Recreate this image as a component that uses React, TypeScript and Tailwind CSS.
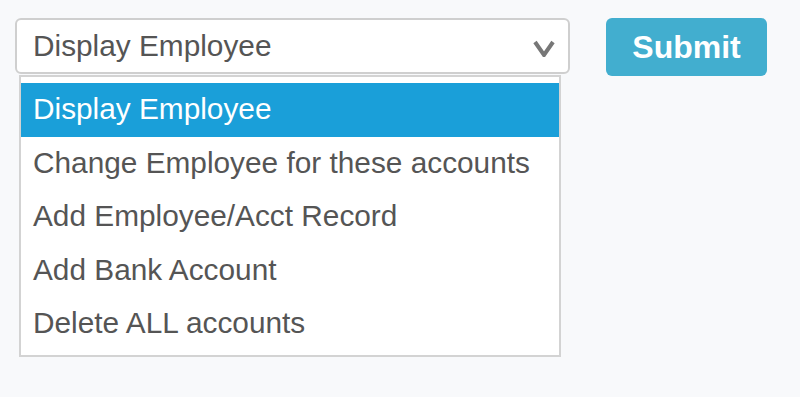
const OPTIONS = [
  'Display Employee',
  'Change Employee for these accounts',
  'Add Employee/Acct Record',
  'Add Bank Account',
  'Delete ALL accounts',
];

export default function App() {
  const selected = 0;
  return (
    <div className="h-[397px] w-[800px] bg-[#f8f9fb] pl-[15px] pt-[18px] font-['Liberation_Sans',Arial,sans-serif]">
      <div className="flex items-start gap-[36px]">
        <div className="w-[555px]">
          <div className="flex h-[56px] items-center justify-between rounded-[6px] border-2 border-[#cfcfcf] bg-white pl-4 pr-[13px] text-[29.8px] text-[#555]">
            <span>{OPTIONS[selected]}</span>
            <svg width="22" height="17" viewBox="0 0 22 17" className="mt-[5px]">
              <polyline points="2,2 11,15 20,2" fill="none" stroke="#777" strokeWidth="4" />
            </svg>
          </div>
          <ul className="ml-[4px] mt-[1px] w-[542px] border-2 border-[#d3d3d3] bg-white pt-[6px] pb-[4px]">
            {OPTIONS.map((opt, i) => (
              <li
                key={opt}
                className={`flex h-[53.5px] items-center pl-3 text-[29.8px] ${
                  i === selected ? 'bg-[#1a9fd9] text-white' : 'text-[#555]'
                }`}
              >
                {opt}
              </li>
            ))}
          </ul>
        </div>
        <button
          type="button"
          className="flex h-[58px] w-[161px] items-center justify-center rounded-[6px] bg-[#42aecf] text-[32px] font-bold text-white"
        >
          Submit
        </button>
      </div>
    </div>
  );
}
